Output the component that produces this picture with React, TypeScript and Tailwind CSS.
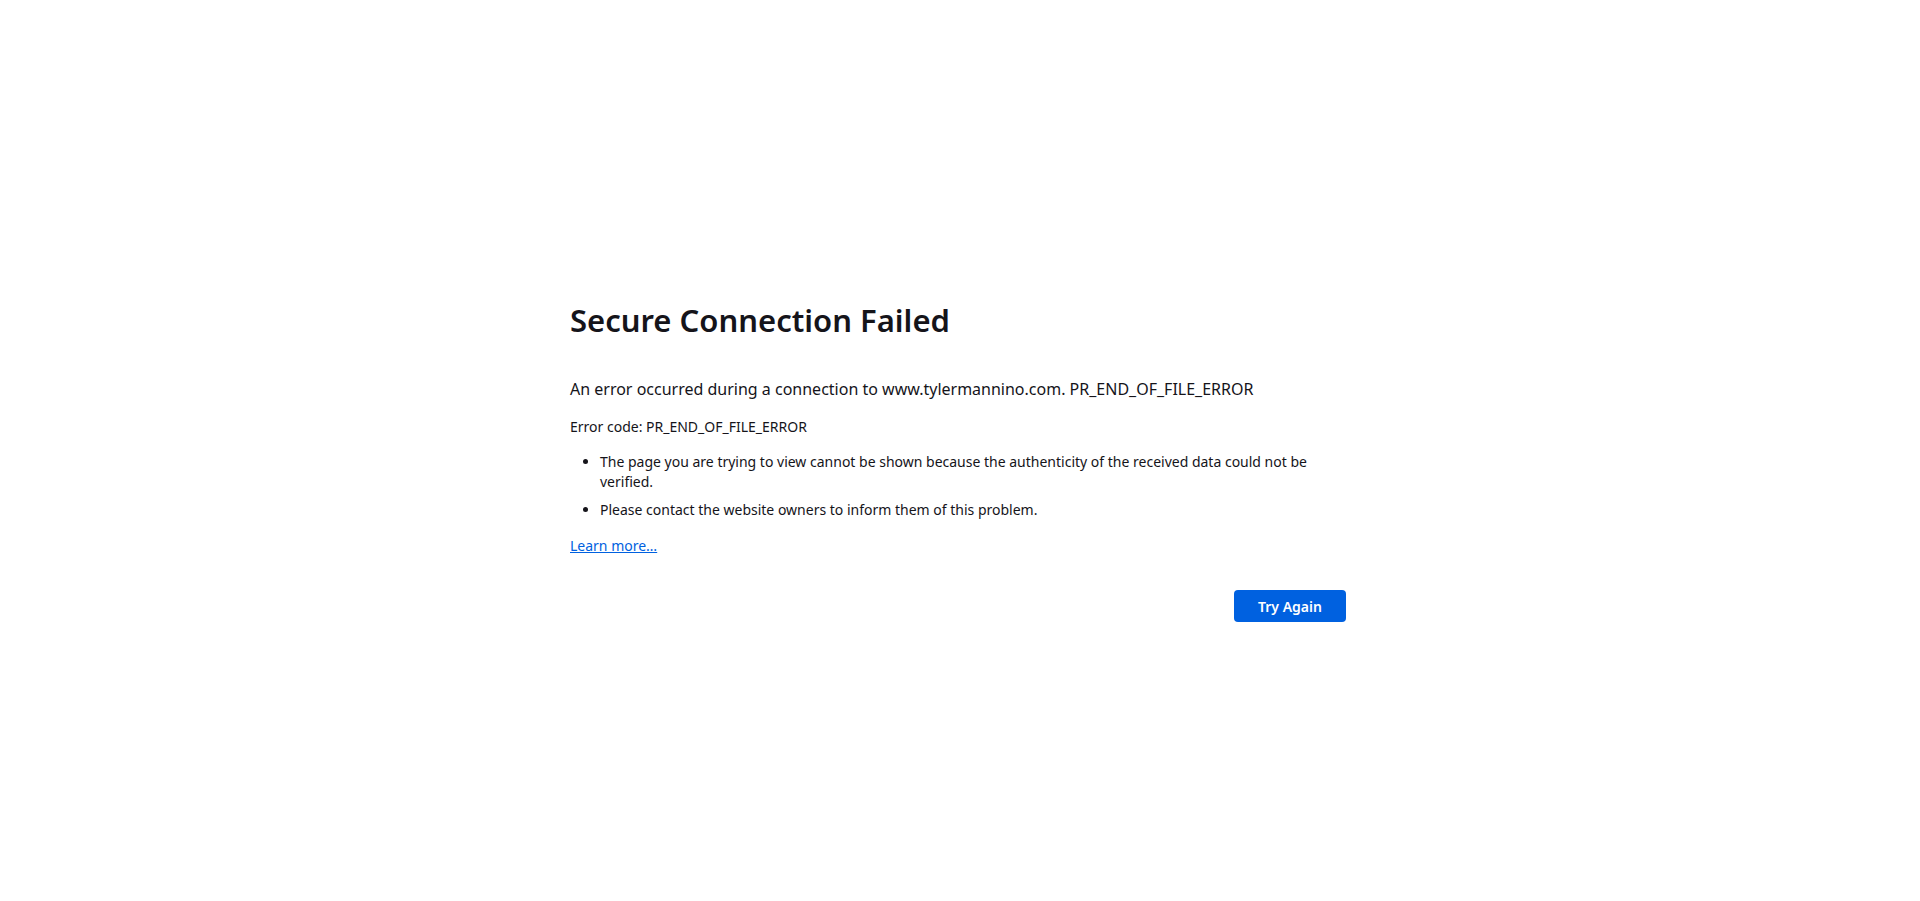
const bullets = [
  'The page you are trying to view cannot be shown because the authenticity of the received data could not be verified.',
  'Please contact the website owners to inform them of this problem.',
];

export default function App() {
  return (
    <div className="min-h-screen bg-white text-[#15141a] font-['Noto_Sans',sans-serif]">
      <div className="mx-auto w-[780px] pt-[300px]">
        <h1 className="text-[31px] leading-[40px] font-semibold">Secure Connection Failed</h1>

        <p className="mt-[37px] text-[16px] leading-[24px]">
          An error occurred during a connection to www.tylermannino.com. PR_END_OF_FILE_ERROR
        </p>

        <p className="mt-[16px] text-[14px] leading-[20px]">Error code: PR_END_OF_FILE_ERROR</p>

        <ul className="mt-[15px] list-disc pl-[30px] text-[14px] leading-[20px] flex flex-col gap-[8px]">
          {bullets.map((b) => (
            <li key={b} className="pr-[34px]">
              {b}
            </li>
          ))}
        </ul>

        <a href="#" className="mt-[16px] block w-fit text-[14px] leading-[20px] text-[#0061e0] underline">
          Learn more…
        </a>

        <div className="mt-[34px] flex justify-end pr-[4px]">
          <button className="h-[32px] w-[112px] rounded-[4px] bg-[#0061e0] text-[14px] font-semibold text-white">
            Try Again
          </button>
        </div>
      </div>
    </div>
  );
}
